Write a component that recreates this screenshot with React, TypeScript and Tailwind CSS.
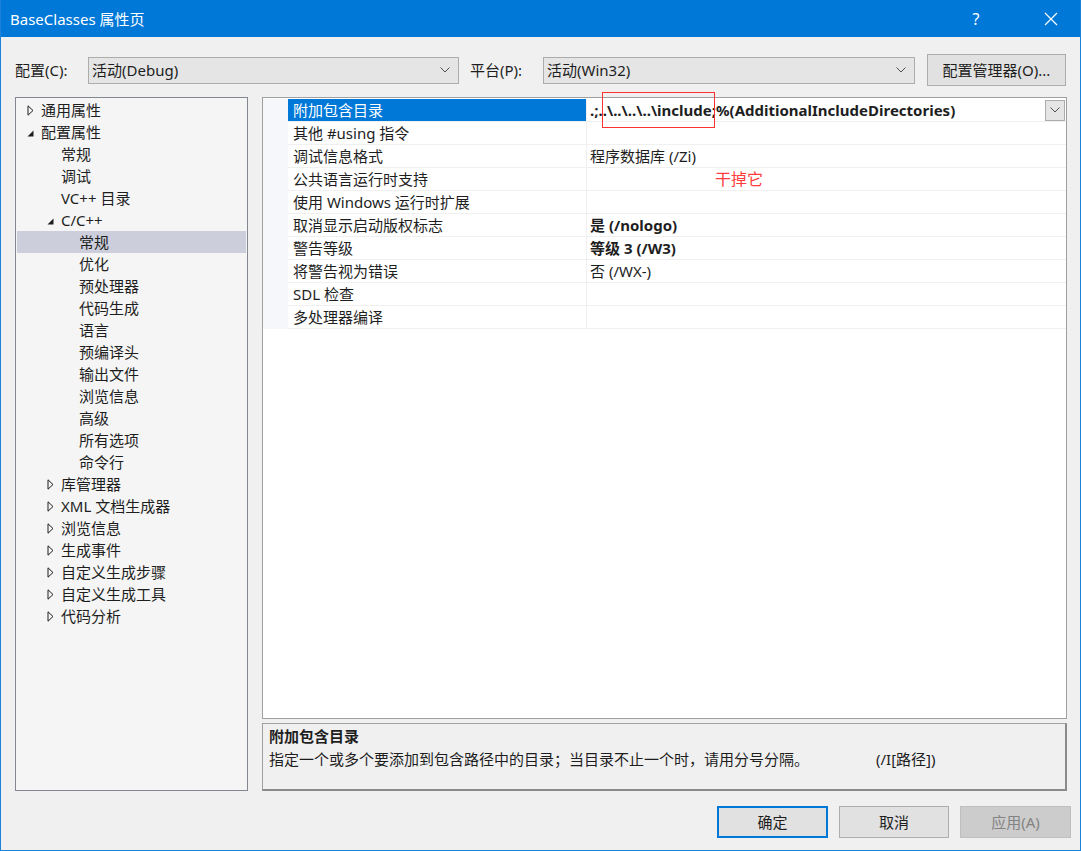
import React from "react"

type TreeItem = {
  label: string
  level: 0 | 1 | 2
  arrow?: "open" | "closed"
  selected?: boolean
}

const tree: TreeItem[] = [
  { label: "通用属性", level: 0, arrow: "closed" },
  { label: "配置属性", level: 0, arrow: "open" },
  { label: "常规", level: 1 },
  { label: "调试", level: 1 },
  { label: "VC++ 目录", level: 1 },
  { label: "C/C++", level: 1, arrow: "open" },
  { label: "常规", level: 2, selected: true },
  { label: "优化", level: 2 },
  { label: "预处理器", level: 2 },
  { label: "代码生成", level: 2 },
  { label: "语言", level: 2 },
  { label: "预编译头", level: 2 },
  { label: "输出文件", level: 2 },
  { label: "浏览信息", level: 2 },
  { label: "高级", level: 2 },
  { label: "所有选项", level: 2 },
  { label: "命令行", level: 2 },
  { label: "库管理器", level: 1, arrow: "closed" },
  { label: "XML 文档生成器", level: 1, arrow: "closed" },
  { label: "浏览信息", level: 1, arrow: "closed" },
  { label: "生成事件", level: 1, arrow: "closed" },
  { label: "自定义生成步骤", level: 1, arrow: "closed" },
  { label: "自定义生成工具", level: 1, arrow: "closed" },
  { label: "代码分析", level: 1, arrow: "closed" },
]

const props: { name: string; value: string; bold?: boolean }[] = [
  { name: "附加包含目录", value: ".;..\\..\\..\\..\\include;%(AdditionalIncludeDirectories)", bold: true },
  { name: "其他 #using 指令", value: "" },
  { name: "调试信息格式", value: "程序数据库 (/Zi)" },
  { name: "公共语言运行时支持", value: "" },
  { name: "使用 Windows 运行时扩展", value: "" },
  { name: "取消显示启动版权标志", value: "是 (/nologo)", bold: true },
  { name: "警告等级", value: "等级 3 (/W3)", bold: true },
  { name: "将警告视为错误", value: "否 (/WX-)" },
  { name: "SDL 检查", value: "" },
  { name: "多处理器编译", value: "" },
]

const indent = { 0: "pl-[10px]", 1: "pl-[30px]", 2: "pl-[48px]" }

function Chevron() {
  return (
    <svg width="10" height="6" viewBox="0 0 10 6">
      <path d="M0.5 0.5 L5 5 L9.5 0.5" fill="none" stroke="#505050" strokeWidth="1" />
    </svg>
  )
}

function Arrow({ kind }: { kind?: "open" | "closed" }) {
  if (kind === "closed")
    return (
      <svg width="7" height="11" viewBox="0 0 7 11">
        <path d="M1 0.8 L6 5.5 L1 10.2 Z" fill="none" stroke="#1e1e1e" strokeWidth="1" />
      </svg>
    )
  if (kind === "open")
    return (
      <svg width="7" height="7" viewBox="0 0 7 7" className="mt-[3px]">
        <path d="M6.5 0.5 L6.5 6.5 L0.5 6.5 Z" fill="#1e1e1e" />
      </svg>
    )
  return null
}

function Combo({ text, width }: { text: string; width: string }) {
  return (
    <div className={`${width} h-[27px] flex items-center justify-between bg-[#e5e5e5] border border-[#acacac] pl-[3px] pr-[8px]`}>
      <span>{text}</span>
      <Chevron />
    </div>
  )
}

export default function App() {
  return (
    <div className="relative w-[1081px] h-[851px] bg-[#1a82d8] px-px pb-px flex flex-col text-[15px] text-[#1e1e1e] font-['Noto_Sans','Noto_Sans_CJK_SC',sans-serif] leading-[22px]">
      {/* title bar */}
      <div className="h-[37px] shrink-0 bg-[#0078d7] text-white flex items-center pl-[9px]">
        <span className="flex-1">BaseClasses 属性页</span>
        <span className="w-[20px] text-center mr-[58px] text-[16px]">?</span>
        <div className="w-[14px] mr-[22px] flex items-center">
          <svg width="14" height="14" viewBox="0 0 14 14">
            <path d="M1 1 L13 13 M13 1 L1 13" stroke="white" strokeWidth="1.2" />
          </svg>
        </div>
      </div>

      <div className="flex-1 bg-[#f0f0f0] flex flex-col">
        {/* config row */}
        <div className="mt-[17px] h-[32px] flex items-center pl-[14px]">
          <span className="w-[73px]">配置(C):</span>
          <Combo text="活动(Debug)" width="w-[371px]" />
          <span className="ml-[11px] w-[73px]">平台(P):</span>
          <Combo text="活动(Win32)" width="w-[372px]" />
          <button className="ml-[12px] w-[139px] h-[32px] bg-[#e1e1e1] border border-[#adadad]">配置管理器(O)...</button>
        </div>

        {/* main */}
        <div className="mt-[11px] h-[694px] flex pl-[14px]">
          <div className="w-[233px] h-full bg-[#f5f5f5] border border-[#828790] pt-px">
            {tree.map((t, i) => (
              <div
                key={i}
                className={`h-[22px] flex items-center mx-px ${indent[t.level]} ${t.selected ? "bg-[#cccedb]" : ""}`}
              >
                <div className="w-[14px] h-full flex items-center">
                  <Arrow kind={t.arrow} />
                </div>
                <span className="whitespace-nowrap">{t.label}</span>
              </div>
            ))}
          </div>

          <div className="ml-[14px] w-[805px] h-full flex flex-col">
            {/* property grid */}
            <div className="h-[622px] bg-white border border-[#a0a0a0] pt-px">
              {props.map((p, i) => (
                <div key={i} className="h-[23px] flex">
                  <div className="w-[25px] h-full bg-[#f5f7fb]" />
                  <div
                    className={`w-[299px] h-full border-b border-r border-[#f0f0f0] pl-[5px] flex items-center whitespace-nowrap ${
                      i === 0 ? "bg-[#0078d7] text-white" : ""
                    }`}
                  >
                    {p.name}
                  </div>
                  <div className="flex-1 h-full border-b border-[#f0f0f0] pl-[3px] flex items-center whitespace-nowrap">
                    <span className={p.bold ? "font-bold" : ""}>{p.value}</span>
                    {i === 0 && (
                      <div className="ml-auto mr-px w-[20px] h-[21px] bg-[#e5e5e5] border border-[#acacac] flex items-center justify-center">
                        <Chevron />
                      </div>
                    )}
                  </div>
                </div>
              ))}
            </div>

            {/* description */}
            <div className="mt-[4px] flex-1 bg-[#f0f0f0] border border-[#a0a0a0] border-b-2 border-r-2 border-b-[#8a8a8a] border-r-[#8a8a8a] pl-[6px] pt-px">
              <div className="font-bold leading-[22px]">附加包含目录</div>
              <div className="leading-[24px] whitespace-nowrap">
                指定一个或多个要添加到包含路径中的目录；当目录不止一个时，请用分号分隔。
                <span className="ml-[67px]">(/I[路径])</span>
              </div>
            </div>
          </div>
        </div>

        {/* buttons */}
        <div className="mt-[15px] h-[32px] flex justify-end gap-[11px] pr-[9px]">
          <button className="w-[111px] h-full bg-[#e1e1e1] border-2 border-[#0078d7]">确定</button>
          <button className="w-[110px] h-full bg-[#e1e1e1] border border-[#adadad]">取消</button>
          <button className="w-[111px] h-full bg-[#cccccc] border border-[#bfbfbf] text-[#838383]">应用(A)</button>
        </div>
      </div>

      {/* annotation */}
      <div className="absolute left-[602px] top-[92px] w-[113px] h-[36px] border border-[#ff3030]" />
      <div className="absolute left-[715px] top-[166px] text-[16px] leading-[24px] text-[#ff3c3c] font-['Noto_Sans_CJK_SC',sans-serif]">
        干掉它
      </div>
    </div>
  )
}
